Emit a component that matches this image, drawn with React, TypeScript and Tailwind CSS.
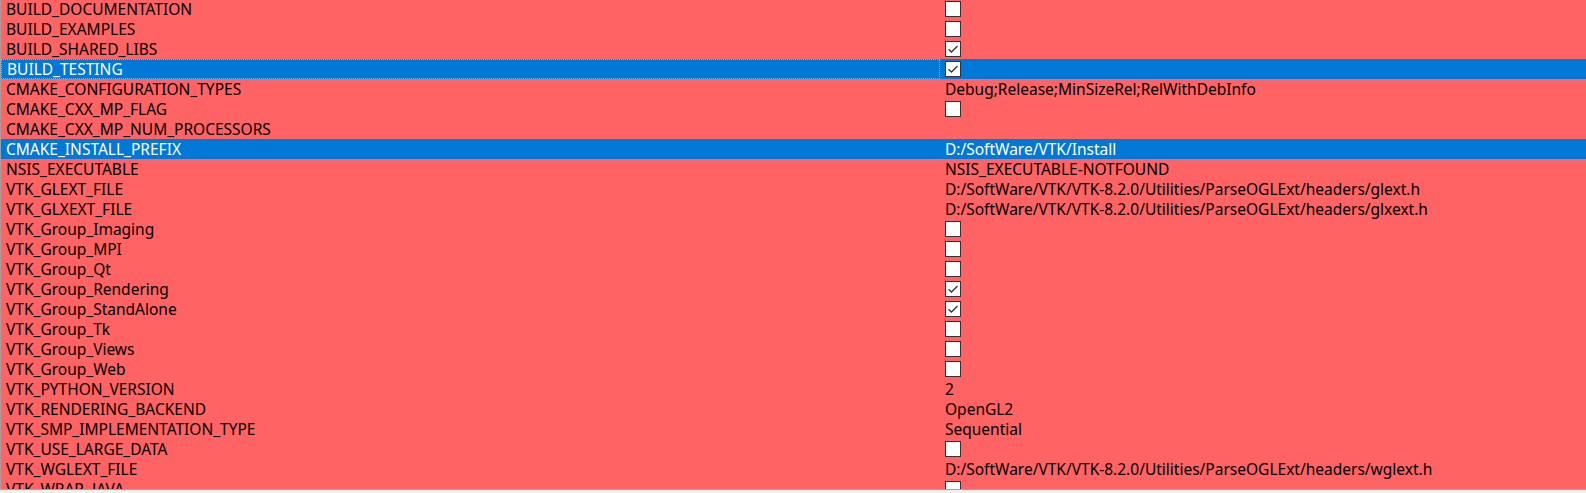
import React from "react";

type Row = { name: string; value?: string; check?: boolean; checked?: boolean; sel?: boolean; focus?: boolean };

const rows: Row[] = [
  { name: "BUILD_DOCUMENTATION", check: true },
  { name: "BUILD_EXAMPLES", check: true },
  { name: "BUILD_SHARED_LIBS", check: true, checked: true },
  { name: "BUILD_TESTING", check: true, checked: true, sel: true, focus: true },
  { name: "CMAKE_CONFIGURATION_TYPES", value: "Debug;Release;MinSizeRel;RelWithDebInfo" },
  { name: "CMAKE_CXX_MP_FLAG", check: true },
  { name: "CMAKE_CXX_MP_NUM_PROCESSORS", value: "" },
  { name: "CMAKE_INSTALL_PREFIX", value: "D:/SoftWare/VTK/Install", sel: true },
  { name: "NSIS_EXECUTABLE", value: "NSIS_EXECUTABLE-NOTFOUND" },
  { name: "VTK_GLEXT_FILE", value: "D:/SoftWare/VTK/VTK-8.2.0/Utilities/ParseOGLExt/headers/glext.h" },
  { name: "VTK_GLXEXT_FILE", value: "D:/SoftWare/VTK/VTK-8.2.0/Utilities/ParseOGLExt/headers/glxext.h" },
  { name: "VTK_Group_Imaging", check: true },
  { name: "VTK_Group_MPI", check: true },
  { name: "VTK_Group_Qt", check: true },
  { name: "VTK_Group_Rendering", check: true, checked: true },
  { name: "VTK_Group_StandAlone", check: true, checked: true },
  { name: "VTK_Group_Tk", check: true },
  { name: "VTK_Group_Views", check: true },
  { name: "VTK_Group_Web", check: true },
  { name: "VTK_PYTHON_VERSION", value: "2" },
  { name: "VTK_RENDERING_BACKEND", value: "OpenGL2" },
  { name: "VTK_SMP_IMPLEMENTATION_TYPE", value: "Sequential" },
  { name: "VTK_USE_LARGE_DATA", check: true },
  { name: "VTK_WGLEXT_FILE", value: "D:/SoftWare/VTK/VTK-8.2.0/Utilities/ParseOGLExt/headers/wglext.h" },
  { name: "VTK_WRAP_JAVA", check: true },
];

function Box({ checked }: { checked?: boolean }) {
  return (
    <div className="w-[16px] h-[16px] border border-[#333333] bg-white flex items-center justify-center">
      {checked && (
        <svg width="12" height="12" viewBox="0 0 12 12">
          <path d="M1.5 6.2 L4.5 9 L10.5 3" fill="none" stroke="#333333" strokeWidth="1.3" />
        </svg>
      )}
    </div>
  );
}

export default function App() {
  return (
    <div
      className="w-[1586px] h-[493px] overflow-hidden bg-[#f0f0f0] flex flex-col"
      style={{ fontFamily: '"Noto Sans", "Open Sans", sans-serif' }}
    >
      <div className="h-[490px] overflow-hidden border-l border-[#a0a0a0] border-b border-b-[#9aa6b2] bg-[#ff6363]">
        <div className="-mt-px flex flex-col">
          {rows.map((r, i) => (
            <div
              key={i}
              className={`flex h-[20px] text-[15.5px] leading-[20px] ${r.sel ? "bg-[#0078d7] text-white" : "text-black"}`}
            >
              <div
                className={`w-[939px] shrink-0 pl-[5px] whitespace-nowrap ${r.focus ? "border border-dotted border-[#f0a040] pl-[4px] leading-[18px]" : ""}`}
              >
                {r.name}
              </div>
              <div className="flex-1 pl-[5px] flex items-center whitespace-nowrap">
                {r.check ? <Box checked={r.checked} /> : <span>{r.value}</span>}
              </div>
            </div>
          ))}
        </div>
      </div>
    </div>
  );
}
